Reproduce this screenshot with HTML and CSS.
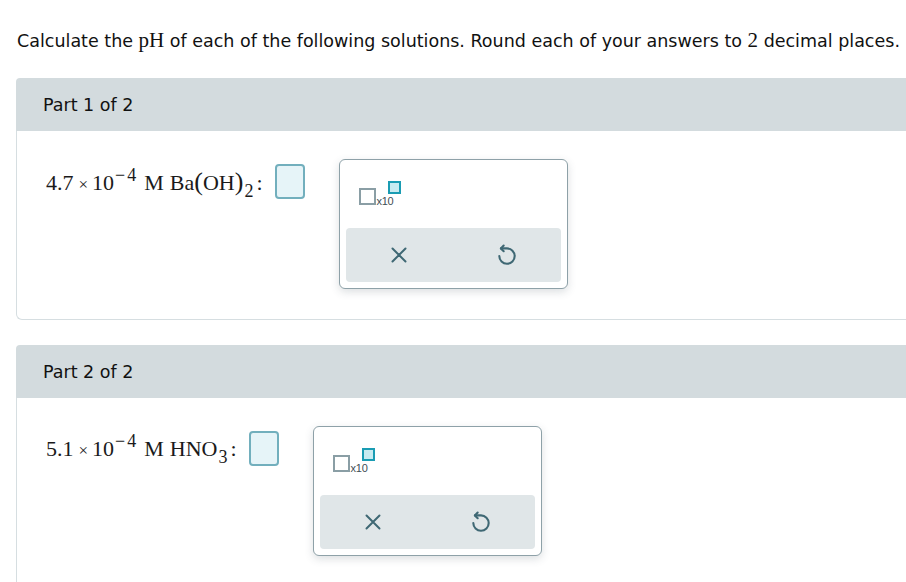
FILE: index.html
```html
<!DOCTYPE html>
<html>
<head>
<meta charset="utf-8">
<link rel="stylesheet" href="styles.css">
</head>
<body>
<p class="prompt">Calculate the <span class="m">pH</span> of each of the following solutions. Round each of your answers to <span class="m">2</span> decimal places.</p>

<section class="part">
  <div class="part-head">Part 1 of 2</div>
  <div class="part-body">
    <div class="answer-row">
      <div class="question">
        <span class="expr">4.7<span class="op">×</span>10<span class="sup">−4</span><span class="unit">M</span>Ba<span class="paren">(</span>OH<span class="paren">)</span><span class="sub">2</span><span class="colon">:</span></span>
        <span class="input"></span>
      </div>
      <div class="palette">
        <div class="tools">
          <span class="sci"><span class="big"></span><span class="x10">x10</span><span class="small"></span></span>
        </div>
        <div class="bar">
          <span class="btn"><svg width="16" height="16" viewBox="0 0 16 16"><path d="M1.5 1.5 L14.5 14.5 M14.5 1.5 L1.5 14.5" stroke="#3f6874" stroke-width="2" fill="none" stroke-linecap="round"/></svg></span>
          <span class="btn"><svg width="22" height="22" viewBox="0 0 20 20"><path d="M4.5 4 L10 4 A7 7 0 1 1 3 11" stroke="#3f6874" stroke-width="1.9" fill="none" stroke-linecap="round"/><path d="M7 1.4 L4.4 4 L7 6.6" stroke="#3f6874" stroke-width="1.9" fill="none" stroke-linecap="round" stroke-linejoin="round"/></svg></span>
        </div>
      </div>
    </div>
  </div>
</section>

<section class="part">
  <div class="part-head">Part 2 of 2</div>
  <div class="part-body">
    <div class="answer-row">
      <div class="question">
        <span class="expr">5.1<span class="op">×</span>10<span class="sup">−4</span><span class="unit">M</span>HNO<span class="sub">3</span><span class="colon">:</span></span>
        <span class="input"></span>
      </div>
      <div class="palette">
        <div class="tools">
          <span class="sci"><span class="big"></span><span class="x10">x10</span><span class="small"></span></span>
        </div>
        <div class="bar">
          <span class="btn"><svg width="16" height="16" viewBox="0 0 16 16"><path d="M1.5 1.5 L14.5 14.5 M14.5 1.5 L1.5 14.5" stroke="#3f6874" stroke-width="2" fill="none" stroke-linecap="round"/></svg></span>
          <span class="btn"><svg width="22" height="22" viewBox="0 0 20 20"><path d="M4.5 4 L10 4 A7 7 0 1 1 3 11" stroke="#3f6874" stroke-width="1.9" fill="none" stroke-linecap="round"/><path d="M7 1.4 L4.4 4 L7 6.6" stroke="#3f6874" stroke-width="1.9" fill="none" stroke-linecap="round" stroke-linejoin="round"/></svg></span>
        </div>
      </div>
    </div>
  </div>
</section>
</body>
</html>
```

FILE: styles.css
```css
html, body {
  margin: 0;
  padding: 0;
  background: #ffffff;
  overflow: hidden;
}
body {
  font-family: "DejaVu Sans", Verdana, sans-serif;
  color: #111;
  width: 906px;
  height: 582px;
}
.prompt {
  margin: 0;
  padding: 28px 0 0 17px;
  font-size: 17.5px;
  line-height: 24px;
  height: 50px;
  white-space: nowrap;
}
.m {
  font-family: "Liberation Serif", "Times New Roman", serif;
  font-size: 21px;
}
.part {
  margin: 0 -30px 25px 16px;
}
.part-head {
  height: 53px;
  background: #d3dbde;
  border-top-left-radius: 4px;
  padding-left: 27px;
  display: flex;
  align-items: center;
  font-size: 17.5px;
}
.part-body {
  border-left: 1px solid #d6dee1;
  border-bottom: 1px solid #d6dee1;
  border-bottom-left-radius: 6px;
  padding: 28px 0 30px 29px;
}
.answer-row {
  display: flex;
  align-items: flex-start;
}
.question {
  display: flex;
  align-items: center;
  margin-top: 5px;
}
.expr {
  font-family: "Liberation Serif", "Times New Roman", serif;
  font-size: 22px;
  color: #1a1a1a;
  white-space: nowrap;
}
.op {
  font-size: 17px;
  margin: 0 4px 0 5px;
}
.sup {
  font-size: 18px;
  position: relative;
  top: -9px;
  margin-left: 1px;
  letter-spacing: 2px;
}
.unit {
  margin: 0 6px 0 6px;
}
.sub {
  font-size: 18px;
  position: relative;
  top: 7px;
  margin-left: 1px;
}
.paren {
  font-size: 26px;
  margin: 0;
}
.colon {
  margin-left: 3px;
}
.input {
  display: inline-block;
  width: 26px;
  height: 31px;
  margin-left: 12px;
  background: #e6f4f8;
  border: 2px solid #72afbd;
  border-radius: 4px;
}
.palette {
  margin-left: 34px;
  width: 227px;
  height: 128px;
  border: 1px solid #8ea1a8;
  border-radius: 6px;
  background: #fff;
  box-shadow: 0 3px 8px rgba(60, 80, 90, 0.18);
  display: flex;
  flex-direction: column;
}
.tools {
  height: 68px;
  padding-left: 19px;
  box-sizing: border-box;
}
.sci {
  display: flex;
  align-items: flex-start;
}
.big {
  width: 13px;
  height: 13px;
  border: 2px solid #8a9ea5;
  margin-top: 28px;
}
.x10 {
  font-family: "Liberation Sans", Arial, sans-serif;
  font-size: 11px;
  color: #3e4e55;
  margin-top: 35px;
  margin-left: 1px;
  letter-spacing: -0.3px;
}
.small {
  width: 9px;
  height: 9px;
  border: 2px solid #1a9cb3;
  background: #c8ebf1;
  margin-top: 21px;
  margin-left: -5px;
}
.bar {
  margin: 0 6px 6px 6px;
  height: 54px;
  background: #e0e6e8;
  border-radius: 4px;
  display: grid;
  grid-template-columns: 1fr 1fr;
  align-items: center;
  justify-items: center;
}
.btn {
  display: flex;
  align-items: center;
  justify-content: center;
}
.btn svg {
  display: block;
}
```
